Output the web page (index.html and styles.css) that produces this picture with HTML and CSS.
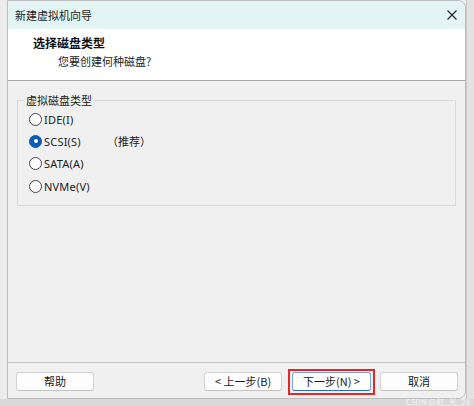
FILE: index.html
```html
<!DOCTYPE html>
<html lang="zh-CN">
<head>
<meta charset="utf-8">
<title>新建虚拟机向导</title>
<link rel="stylesheet" href="styles.css">
</head>
<body>
<div class="stage">
  <div class="window">
    <div class="titlebar">
      <span class="title">新建虚拟机向导</span>
      <svg class="close" width="10" height="10" viewBox="0 0 10 10"><path d="M0.5 0.5 L9.5 9.5 M9.5 0.5 L0.5 9.5" stroke="#222" stroke-width="1.1" fill="none"/></svg>
    </div>
    <div class="header">
      <div class="h-title">选择磁盘类型</div>
      <div class="h-sub">您要创建何种磁盘?</div>
    </div>
    <div class="body">
      <fieldset class="group">
        <legend>虚拟磁盘类型</legend>
        <div class="row"><span class="radio"></span><span class="label">IDE(I)</span></div>
        <div class="row"><span class="radio checked"></span><span class="label">SCSI(S)</span><span class="rec">（推荐）</span></div>
        <div class="row"><span class="radio"></span><span class="label">SATA(A)</span></div>
        <div class="row"><span class="radio"></span><span class="label">NVMe(V)</span></div>
      </fieldset>
    </div>
    <div class="footer">
      <button class="btn">帮助</button>
      <div class="spacer"></div>
      <button class="btn">&lt; 上一步(B)</button>
      <div class="ring"><button class="btn primary">下一步(N) &gt;</button></div>
      <button class="btn">取消</button>
    </div>
  </div>
  <div class="right-strip"></div>
</div>
<div class="watermark">CSDN @虹_光_24</div>
</body>
</html>
```
FILE: styles.css
```css
html, body {
  margin: 0;
  padding: 0;
}
body {
  width: 474px;
  height: 406px;
  background: #d9d9d9;
  font-family: "Noto Sans", "Noto Sans CJK SC", sans-serif;
  color: #1b1b1b;
  position: relative;
  overflow: hidden;
}
.stage {
  display: flex;
  height: 399px;
  background: #ececec;
  padding-left: 7px;
}
.window {
  width: 457px;
  height: 397px;
  border: 1px solid #bcbcbc;
  border-radius: 0 8px 8px 0;
  background: #f0f0f0;
  display: flex;
  flex-direction: column;
  overflow: hidden;
}
.right-strip {
  flex: 1;
  background: #e2e2e2;
  border-left: 1px solid #c8c8c8;
}
.titlebar {
  height: 28px;
  background: #e2f5f4;
  display: flex;
  align-items: center;
  padding: 0 8px 0 7px;
}
.title {
  flex: 1;
  font-size: 11px;
  font-family: "Noto Sans CJK SC", sans-serif;
  color: #222;
}
.close {
  display: block;
}
.header {
  height: 51px;
  background: #ffffff;
  border-bottom: 1px solid #a8a8a8;
  padding-left: 25px;
  font-family: "Noto Sans CJK SC", sans-serif;
}
.h-title {
  font-size: 12px;
  font-weight: 700;
  line-height: 16px;
  margin-top: 6px;
  color: #111;
}
.h-sub {
  font-size: 11px;
  line-height: 16px;
  margin-top: 2px;
  padding-left: 25px;
  color: #222;
}
.body {
  flex: 1;
  background: #f0f0f0;
  padding: 11px 9px 0 9px;
  border-bottom: 1px solid #c6c6c6;
}
.group {
  margin: 0;
  padding: 0 0 8px 11px;
  border: 1px solid #dadada;
  border-radius: 0;
}
.group legend {
  font-family: "Noto Sans CJK SC", sans-serif;
  font-size: 11px;
  line-height: 16px;
  padding: 0 2px;
  margin-left: -5px;
  color: #222;
}
.row {
  display: flex;
  align-items: center;
  height: 22.3px;
  font-size: 11px;
}
.radio {
  width: 11px;
  height: 11px;
  border: 1px solid #444;
  border-radius: 50%;
  background: #fff;
  box-sizing: content-box;
  flex: none;
}
.radio.checked {
  background: #0b5cb8;
  border-color: #0b5cb8;
  position: relative;
}
.radio.checked::after {
  content: "";
  position: absolute;
  left: 3.5px;
  top: 3.5px;
  width: 4px;
  height: 4px;
  border-radius: 50%;
  background: #fff;
}
.label {
  margin-left: 2px;
  width: 63px;
  letter-spacing: 0.2px;
}
.rec {
  font-family: "Noto Sans CJK SC", sans-serif;
}
.footer {
  height: 35px;
  display: flex;
  align-items: flex-start;
  padding: 9px 7px 0 8px;
  box-sizing: border-box;
  gap: 9px;
  background: #f0f0f0;
}
.spacer {
  flex: 1;
}
.btn {
  width: 78px;
  height: 19px;
  margin: 0;
  padding: 0;
  background: #fdfdfd;
  border: 1px solid #d2d2d2;
  border-bottom-color: #c2c2c2;
  border-radius: 3px;
  font-family: "Noto Sans CJK SC", sans-serif;
  font-size: 11px;
  color: #1b1b1b;
  line-height: 17px;
}
.ring {
  border: 2px solid #e3262a;
  padding: 1px 2px 2px 2px;
  margin: -3px -4px -4px -3px;
  display: flex;
}
.btn.primary {
  width: 79px;
  border-color: #7fa6d6;
  border-bottom-color: #2f6db3;
}
.watermark {
  position: absolute;
  right: 4px;
  bottom: -1px;
  font-size: 8px;
  color: #f4f4f4;
  font-family: "Noto Sans CJK SC", sans-serif;
}
```
